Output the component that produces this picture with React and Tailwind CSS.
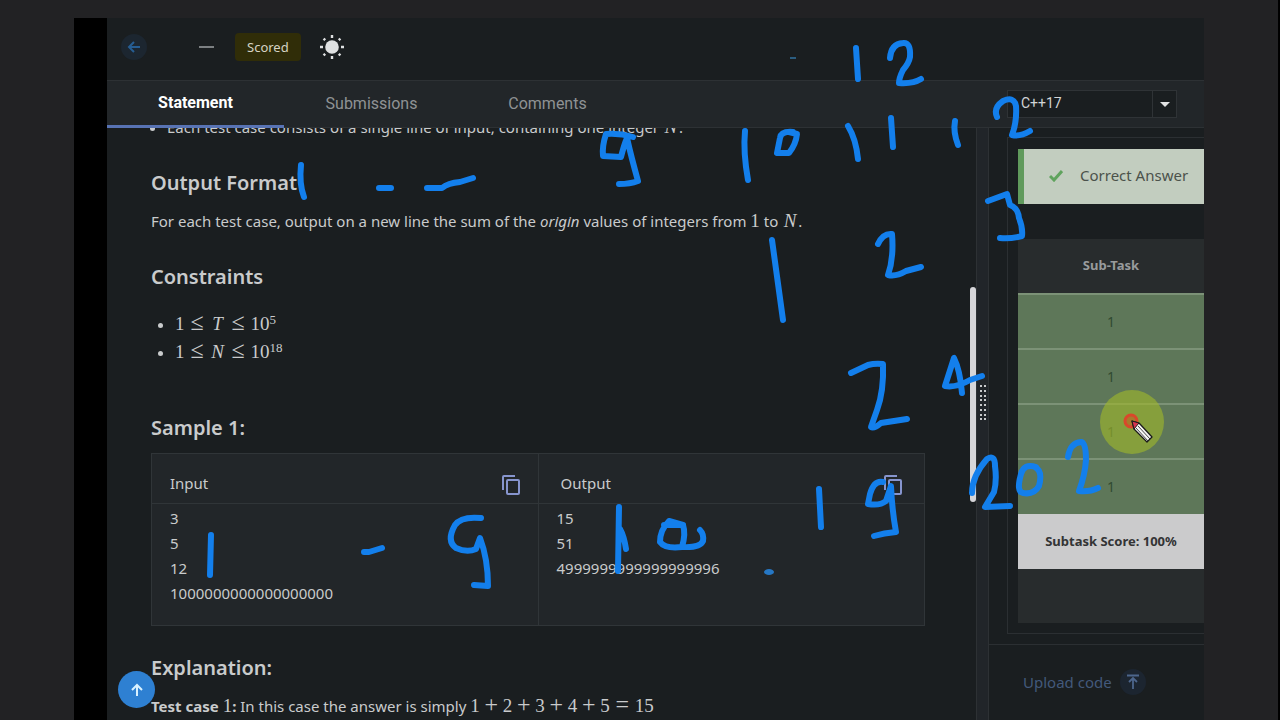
import React from 'react';

const SAMPLES = {
    input: ['3', '5', '12', '1000000000000000000'],
    output: ['15', '51', '4999999999999999996'],
};

const SUBTASKS = [1, 1, 1, 1];

const GRIP_DOTS = Array.from({ length: 16 }, (_, i) => i);

// Pen strokes drawn on top of the page
const STROKES = [
    'M856 48 L858 79',
    'M890 58 Q891 44 903 43 Q911 42 910 57 Q909 63 903 70 Q899 78 899 83 Q913 84 921 79',
    'M745 131 Q743 152 748 180',
    'M793 132 Q781 131 780 138 L777 153 L789 153 Q796 144 797 134 L789 132',
    'M848 126 Q856 139 858 159',
    'M891 118 L893 147',
    'M955 121 Q953 132 958 145',
    'M633 137 Q620 133 606 134 Q602 146 603 156 L621 157 Q624 145 627 138 Q631 156 638 181 Q630 184 619 184',
    'M997 117 Q993 108 1003 101 Q1014 96 1016 106 Q1017 122 1012 135 Q1020 137 1030 131',
    'M988 201 L1007 194 L1010 205 Q1018 208 1019 218 Q1023 228 1022 236 Q1011 239 1000 238',
    'M301 165 Q299 184 304 197',
    'M379 188 L391 188',
    'M427 188 L442 188 Q448 183 460 182 L473 178',
    'M772 240 L783 320',
    'M878 244 Q883 233 892 234 Q894 258 888 275 Q896 277 906 271 L921 267',
    'M851 373 L868 365 Q875 363 883 364 Q884 391 877 410 L871 427 Q874 429 881 423 L907 419',
    'M962 393 Q960 370 954 358 L945 386 Q956 388 970 380 L982 376',
    'M211 535 L210 575',
    'M364 552 L369 552 L382 548',
    'M481 518 Q461 516 455 525 Q446 541 456 548 Q467 553 476 549 L480 538 Q488 559 488 586 L474 585',
    'M619 507 L618 571 M620 529 Q624 536 626 549',
    'M664 525 L683 525 Q686 534 682 547 Q665 549 660 542 Q660 530 669 521 L683 525 M682 547 Q700 548 703 541 Q704 534 700 530',
    'M819 489 L821 527',
    'M883 482 Q874 480 870 494 L868 504 Q880 506 886 501 L891 486 Q892 510 896 532 Q884 533 874 536',
    'M972 493 Q972 476 987 459 Q995 454 995 466 Q997 481 994 492 L985 507 L1010 506',
    'M1036 467 Q1024 463 1021 474 Q1016 492 1023 493 Q1034 495 1039 486 Q1043 471 1035 467',
    'M1068 457 Q1070 443 1081 442 Q1086 442 1086 460 Q1085 475 1079 491 Q1090 492 1098 488',
];

const Num = ({ children }) => <span className="text-[19px] font-normal">{children}</span>;
const Var = ({ children }) => <i className="inline-block min-w-4 text-center text-[19px]">{children}</i>;
const Op = ({ children }) => (
    <span className="mx-1 inline-block w-[15px] text-center text-2xl leading-4 font-normal">{children}</span>
);
const Rel = ({ children }) => (
    <span className="mx-[5px] inline-block w-[15px] text-center text-2xl leading-4 font-normal">{children}</span>
);
const Maths = ({ children }) => (
    <span className="whitespace-nowrap font-['Liberation_Serif',serif] leading-none">{children}</span>
);

const CopyIcon = () => (
    <svg width="20" height="22" viewBox="0 0 20 22" fill="none" stroke="#8795ce" strokeWidth="2">
        <path d="M2 16V3a1 1 0 0 1 1-1h11" />
        <rect x="6" y="6" width="12" height="14" rx="1" />
    </svg>
);

const SunIcon = () => (
    <svg width="26" height="26" viewBox="0 0 26 26" fill="#dfe1e2" stroke="#dfe1e2" strokeWidth="2.4">
        <circle cx="13" cy="13" r="6.8" stroke="none" />
        <path d="M13 1v3M13 22v3M1 13h3M22 13h3M4.6 4.6l1.6 1.6M19.8 19.8l1.6 1.6M4.6 21.4l1.6-1.6M19.8 6.2l1.6-1.6" />
    </svg>
);

const Header = () => (
    <header className="flex h-[62px] items-center pl-3.5 pb-1">
        <button aria-label="Back" className="flex size-[26px] items-center justify-center rounded-full bg-[#1c2630]">
            <svg width="14" height="14" viewBox="0 0 14 14" fill="none" stroke="#265d92" strokeWidth="2">
                <path d="M13 7H2M7 2L2 7l5 5" />
            </svg>
        </button>
        <span className="ml-[52px] h-0.5 w-[15px] bg-[#7c8082]" />
        <span className="ml-[21px] rounded bg-[#302d08] px-3 py-1 text-[13px] leading-5 text-[#d5d3c4]">Scored</span>
        <button aria-label="Toggle theme" className="ml-[18px]">
            <SunIcon />
        </button>
    </header>
);

const Tabs = () => (
    <nav className="flex h-12 flex-1 font-['Roboto','Liberation_Sans',sans-serif] text-base text-[#8f9294]">
        <button className="w-[177px] border-b-[3px] border-[#5873b4] font-bold text-white">Statement</button>
        <button className="w-[175px]">Submissions</button>
        <button className="w-[177px]">Comments</button>
    </nav>
);

const SampleTable = () => (
    <table className="w-full table-fixed border-collapse bg-[#222629] text-left">
        <thead>
            <tr className="h-[50px]">
                {['Input', 'Output'].map((name) => (
                    <th key={name} className="border border-[#303538] pr-[17px] pt-2 font-normal first:pl-[18px] last:pl-[22px] last:pr-[21px]">
                        <div className="flex items-center justify-between">
                            {name}
                            <button aria-label={`Copy ${name}`} className="pt-1">
                                <CopyIcon />
                            </button>
                        </div>
                    </th>
                ))}
            </tr>
        </thead>
        <tbody>
            <tr className="h-[122px] align-top">
                {[SAMPLES.input, SAMPLES.output].map((lines, i) => (
                    <td key={i} className="border border-[#303538] px-[18px] pt-0.5">
                        {lines.map((line) => (
                            <div key={line} className="leading-[25px]">{line}</div>
                        ))}
                    </td>
                ))}
            </tr>
        </tbody>
    </table>
);

const Statement = () => (
    <main className="flex min-w-0 flex-1 overflow-hidden">
        <div className="-mt-[13px] min-w-0 flex-1 pl-11 pr-[45px] text-[15px] leading-6 text-[#c9cbcc]">
            <ul className="list-disc pl-4">
                <li>Each test case consists of a single line of input, containing one integer <Maths><Var>N</Var></Maths>.</li>
            </ul>
            <h3 className="mt-[30px] text-xl font-semibold leading-7">Output Format</h3>
            <p className="mt-3">
                For each test case, output on a new line the sum of the <em>origin</em> values of integers from{' '}
                <Maths><Num>1</Num></Maths> to <Maths><Var>N</Var></Maths>.
            </p>
            <h3 className="mt-[30px] text-xl font-semibold leading-7">Constraints</h3>
            <ul className="mt-[19px] list-disc pl-6 leading-7">
                <li>
                    <Maths><Num>1</Num><Rel>≤</Rel><Var>T</Var><Rel>≤</Rel><Num>10</Num><sup className="text-[13px]">5</sup></Maths>
                </li>
                <li>
                    <Maths><Num>1</Num><Rel>≤</Rel><Var>N</Var><Rel>≤</Rel><Num>10</Num><sup className="text-[13px]">18</sup></Maths>
                </li>
            </ul>
            <h3 className="mt-12 text-xl font-semibold leading-7">Sample 1:</h3>
            <div className="mt-[11px]">
                <SampleTable />
            </div>
            <h3 className="mt-7 text-xl font-semibold leading-7">Explanation:</h3>
            <p className="mt-3">
                <strong>Test case <Maths><Num>1</Num></Maths>:</strong> In this case the answer is simply{' '}
                <Maths>
                    <Num>1</Num><Op>+</Op><Num>2</Num><Op>+</Op><Num>3</Num><Op>+</Op><Num>4</Num><Op>+</Op><Num>5</Num>
                    <Rel>=</Rel><Num>15</Num>
                </Maths>
            </p>
        </div>
        <div className="w-1.5 pt-[159px]">
            <div className="h-[215px] rounded-full bg-[#d6d6d9]" />
        </div>
    </main>
);

const Gutter = () => (
    <div className="flex w-[13px] justify-center border-x border-[#2d3134] bg-[#212529] pt-[257px]">
        <div className="grid h-9 grid-cols-2 gap-0.5">
            {GRIP_DOTS.map((dot) => (
                <span key={dot} className="size-0.5 bg-[#c8cacb]" />
            ))}
        </div>
    </div>
);

const Result = () => (
    <aside className="flex w-[215px] flex-col overflow-hidden text-[#c9cbcc]">
        <div className="ml-[18px] mt-[9px] border-y border-l border-[#2b2f32] pb-2.5 pl-2.5 pt-[11px]">
            <div className="flex h-[55px] items-center border-l-[6px] border-[#609a5c] bg-[#c2cdbf] pb-0.5 pl-[25px] text-[15px] text-[#4b524b]">
                <svg width="14" height="12" viewBox="0 0 14 12" fill="none" stroke="#5fa35d" strokeWidth="3">
                    <path d="M1 6l4 4 8-9" />
                </svg>
                <span className="ml-[17px] whitespace-nowrap">Correct Answer</span>
            </div>
            <table className="mt-[35px] w-full border-collapse bg-[#282c2d] text-center text-[13px]">
                <thead>
                    <tr className="h-[55px]">
                        <th className="font-bold text-[#989b9c]">Sub-Task</th>
                    </tr>
                </thead>
                <tbody>
                    {SUBTASKS.map((task, i) => (
                        <tr key={i} className="h-[55px] border-t-2 border-[#7c9277] bg-[#5e7759] text-sm text-[#314a31]">
                            <td>{task}</td>
                        </tr>
                    ))}
                    <tr className="h-[55px] bg-[#cbcbcc] font-bold text-[#333435]">
                        <td>Subtask Score: 100%</td>
                    </tr>
                    <tr className="h-[54px]">
                        <td />
                    </tr>
                </tbody>
            </table>
        </div>
        <div className="mt-2.5 border-t border-[#2b2f32] pl-[34px] pt-6">
            <button className="flex items-center gap-2 text-[15px] text-[#43597b]">
                Upload code
                <span className="flex size-[26px] items-center justify-center rounded-full bg-[#1c2530]">
                    <svg width="14" height="16" viewBox="0 0 14 16" fill="none" stroke="#4d668c" strokeWidth="1.8">
                        <path d="M1 1.5h12M7 15V4M3 8l4-4 4 4" />
                    </svg>
                </span>
            </button>
        </div>
    </aside>
);

const Annotations = () => (
    <svg className="pointer-events-none absolute left-0 top-0" width="1280" height="720" viewBox="0 0 1280 720">
        <g fill="none" stroke="#137fec" strokeWidth="6" strokeLinecap="round" strokeLinejoin="round">
            {STROKES.map((d) => (
                <path key={d} d={d} />
            ))}
        </g>
        <path d="M790 58h6" stroke="#2b5d80" strokeWidth="2" />
        <ellipse cx="769" cy="572" rx="5" ry="3" fill="#2677c4" />
        <circle cx="1132" cy="422" r="32" fill="#9fb82a" fillOpacity="0.62" />
        <circle cx="1131" cy="421" r="6" fill="#a87a2c" stroke="#d9482b" strokeWidth="3" />
        <g strokeLinejoin="round">
            <path d="M1132 421l7 2 13 14-5 5-13-13z" fill="#f7f7f5" stroke="#1b1b1b" strokeWidth="1.3" />
            <path d="M1132 421l7 2-5 6z" fill="#d63450" stroke="#1b1b1b" />
            <path d="M1138 426l12 13M1136 428l12 13" fill="none" stroke="#333" strokeWidth="0.9" />
        </g>
    </svg>
);

const App = () => (
    <div className="relative flex h-screen overflow-hidden border-r-2 border-black bg-[#222224] pl-[74px] pr-[74px] pt-[18px] font-['Noto_Sans',sans-serif]">
        <div className="w-[33px] bg-black" />
        <div className="relative flex min-w-0 flex-1 flex-col bg-[#1a1e20]">
            <Header />
            <div className="flex h-12 items-center border-y border-[#2d3134] bg-[#222629]">
                <Tabs />
                <div className="relative mr-[27px] w-[170px]">
                    <select
                        aria-label="Language"
                        className="block h-7 w-full appearance-none border border-[#2f3336] bg-[#1a1e20] pb-0.5 pl-[13px] font-['Roboto','Liberation_Sans',sans-serif] text-sm text-[#d3d5d6]"
                    >
                        <option>C++17</option>
                    </select>
                    <span className="pointer-events-none absolute inset-y-0 right-0 flex w-[25px] items-center justify-center border-l border-[#2f3336]">
                        <svg width="10" height="5" viewBox="0 0 10 5" fill="#e2e3e4"><path d="M0 0h10L5 5z" /></svg>
                    </span>
                </div>
            </div>
            <div className="flex min-h-0 flex-1">
                <Statement />
                <Gutter />
                <Result />
            </div>
            <button
                aria-label="Back to top"
                className="absolute bottom-3 left-[11px] flex size-[37px] items-center justify-center rounded-full bg-[#2e80d2]"
            >
                <svg width="14" height="14" viewBox="0 0 14 14" fill="none" stroke="#d9f1ff" strokeWidth="2">
                    <path d="M7 13V2M2 7l5-5 5 5" />
                </svg>
            </button>
        </div>
        <Annotations />
    </div>
);

export default App;
